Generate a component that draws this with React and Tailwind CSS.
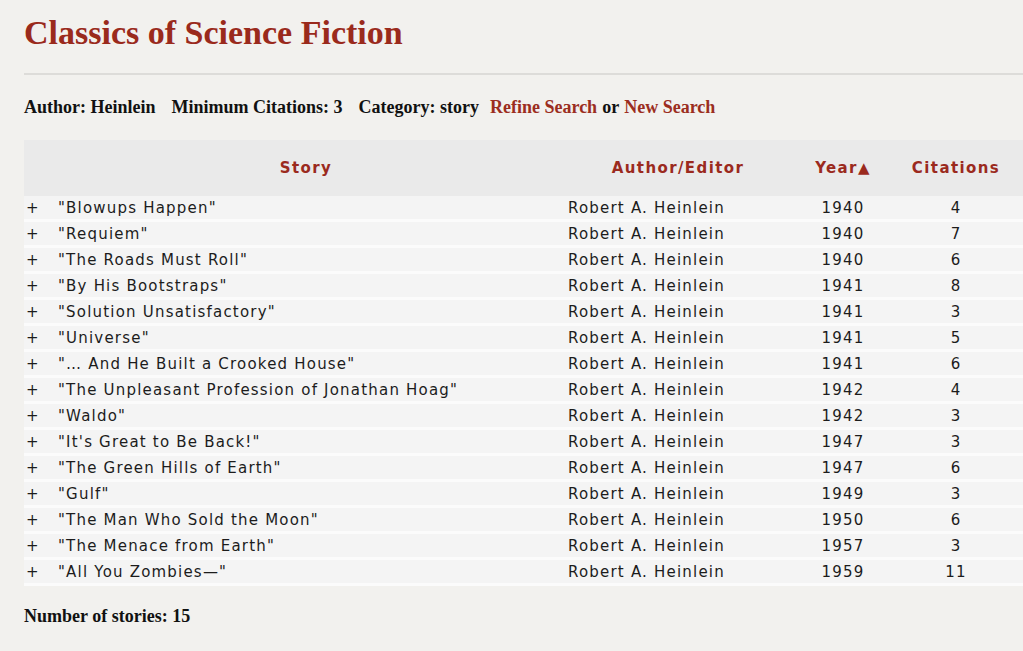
import React from "react";

const rows = [
  ['"Blowups Happen"', "1940", "4"],
  ['"Requiem"', "1940", "7"],
  ['"The Roads Must Roll"', "1940", "6"],
  ['"By His Bootstraps"', "1941", "8"],
  ['"Solution Unsatisfactory"', "1941", "3"],
  ['"Universe"', "1941", "5"],
  ['"… And He Built a Crooked House"', "1941", "6"],
  ['"The Unpleasant Profession of Jonathan Hoag"', "1942", "4"],
  ['"Waldo"', "1942", "3"],
  ['"It\'s Great to Be Back!"', "1947", "3"],
  ['"The Green Hills of Earth"', "1947", "6"],
  ['"Gulf"', "1949", "3"],
  ['"The Man Who Sold the Moon"', "1950", "6"],
  ['"The Menace from Earth"', "1957", "3"],
  ['"All You Zombies—"', "1959", "11"],
];

const serif = "font-['Liberation_Serif',serif]";
const sans = "font-['DejaVu_Sans',Verdana,sans-serif]";
const cols = "grid grid-cols-[26px_512px_232px_98px_132px]";

export default function App() {
  return (
    <div className="min-h-[651px] w-full overflow-hidden bg-[#f2f1ee]">
      <div className="pl-6">
        <h1 className={`${serif} pt-3 text-[34px] font-bold leading-[42px] text-[#9a2a1c]`}>
          Classics of Science Fiction
        </h1>
        <div className="mt-[19px] h-[2px] bg-[#dddcd9]" />
        <div className={`${serif} mt-5 flex items-center text-[18px] font-bold leading-6 text-[#111]`}>
          <span>Author: Heinlein</span>
          <span className="ml-4">Minimum Citations: 3</span>
          <span className="ml-4">Category: story</span>
          <span className="ml-[11px] text-[#9b2d20]">Refine Search</span>
          <span className="ml-[5px]">or</span>
          <span className="ml-[5px] text-[#9b2d20]">New Search</span>
        </div>
        <div className={`${sans} mt-[21px] w-[1000px]`}>
          <div className={`${cols} h-14 items-center bg-[#eaeaea] text-[15px] font-bold tracking-[1.4px] text-[#9b2a1e]`}>
            <div />
            <div className="text-center">Story</div>
            <div className="text-center">Author/Editor</div>
            <div className="text-center">Year▲</div>
            <div className="pr-1 text-center">Citations</div>
          </div>
          {rows.map(([title, year, cites], i) => (
            <div
              key={i}
              className={`${cols} h-[26px] items-center border-b-[3px] border-[#fbfbfb] bg-[#f4f4f4] pt-[2px] text-[15px] leading-[21px] tracking-[1.2px] text-[#1c1c1c]`}
            >
              <div className="pl-[2px]">+</div>
              <div className="pl-2 whitespace-nowrap">{title}</div>
              <div className="pl-[6px] whitespace-nowrap">Robert A. Heinlein</div>
              <div className="text-center">{year}</div>
              <div className="pr-1 text-center">{cites}</div>
            </div>
          ))}
        </div>
        <div className={`${serif} mt-[18px] text-[18px] font-bold leading-6 text-[#111]`}>
          Number of stories: 15
        </div>
      </div>
    </div>
  );
}
